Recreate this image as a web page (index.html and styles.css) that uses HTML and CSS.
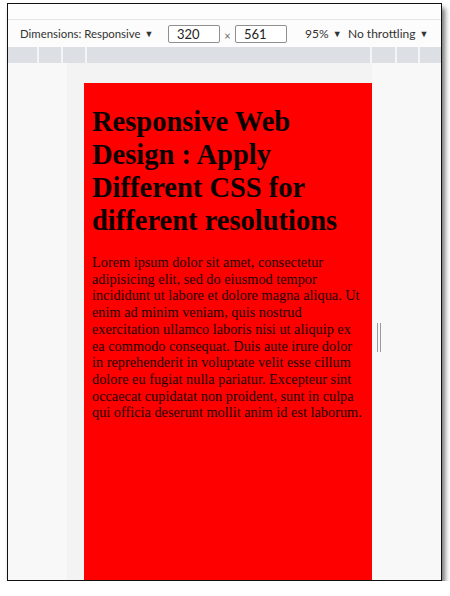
FILE: index.html
```html
<!DOCTYPE html>
<html>
<head>
<meta charset="utf-8">
<link rel="stylesheet" href="styles.css">
</head>
<body>
<div class="window">
  <div class="topstrip"></div>
  <div class="toolbar">
    <span class="dim">Dimensions: Responsive <span class="arrow">▼</span></span>
    <span class="box">320</span>
    <span class="times">×</span>
    <span class="box">561</span>
    <span class="zoom">95% <span class="arrow">▼</span></span>
    <span class="throttle">No throttling <span class="arrow">▼</span></span>
  </div>
  <div class="ruler">
    <div class="cell c1"></div>
    <div class="cell c2"></div>
    <div class="cell c3"></div>
    <div class="cell c4"></div>
    <div class="cell c5"></div>
    <div class="cell c6"></div>
    <div class="cell c7"></div>
  </div>
  <div class="viewport">
    <div class="device-shade">
      <div class="device">
        <h1 class="title">Responsive Web Design : Apply Different CSS for different resolutions</h1>
        <p class="text">Lorem ipsum dolor sit amet, consectetur adipisicing elit, sed do eiusmod tempor incididunt ut labore et dolore magna aliqua. Ut enim ad minim veniam, quis nostrud exercitation ullamco laboris nisi ut aliquip ex ea commodo consequat. Duis aute irure dolor in reprehenderit in voluptate velit esse cillum dolore eu fugiat nulla pariatur. Excepteur sint occaecat cupidatat non proident, sunt in culpa qui officia deserunt mollit anim id est laborum.</p>
      </div>
      <div class="handle-col">
        <div class="handle"></div>
      </div>
    </div>
  </div>
</div>
</body>
</html>
```
FILE: styles.css
```css
html, body {
  margin: 0;
  padding: 0;
  background: #ffffff;
}
.window {
  margin: 3px 0 0 7px;
  width: 433px;
  height: 576px;
  border: 1px solid #111;
  box-shadow: 3px 5px 5px rgba(0, 0, 0, 0.55);
  display: flex;
  flex-direction: column;
  overflow: hidden;
  background: #f8f8f8;
}
.topstrip {
  height: 15px;
  background: #fdfdfd;
  border-bottom: 1px solid #e6e6e6;
  flex: none;
}
.toolbar {
  height: 27px;
  flex: none;
  background: #fcfcfc;
  display: flex;
  align-items: center;
  font-family: Lato, "Open Sans", sans-serif;
  font-size: 12px;
  color: #333;
  padding-left: 12px;
  white-space: nowrap;
}
.arrow {
  font-size: 9px;
  position: relative;
  top: -1px;
  margin-left: 1px;
}
.dim {
  width: 148px;
  flex: none;
  font-size: 11.4px;
}
.box {
  width: 42px;
  height: 16px;
  border: 1px solid #8f8f8f;
  border-radius: 2px;
  background: #fff;
  padding-left: 8px;
  font-size: 13px;
  line-height: 16px;
  color: #222;
  flex: none;
}
.times {
  width: 15px;
  text-align: center;
  margin-top: 3px;
  color: #666;
  font-size: 11px;
  flex: none;
}
.zoom {
  margin-left: 18px;
  width: 43px;
  flex: none;
}
.ruler {
  height: 16px;
  flex: none;
  display: flex;
  gap: 2px;
  background: #f4f5f6;
}
.cell {
  background: #dcdfe3;
  height: 100%;
}
.c1 { width: 29px; }
.c2 { width: 22px; }
.c3 { width: 22px; }
.c4 { flex: 1; }
.c5 { width: 23px; }
.c6 { width: 21px; }
.c7 { width: 21px; }
.viewport {
  flex: 1;
  background: #f8f8f8;
  padding-left: 59px;
  display: flex;
}
.device-shade {
  display: flex;
  background: #f3f3f3;
  padding-left: 17px;
  width: 288px;
  padding-top: 20px;
}
.device {
  width: 288px;
  background: #ff0000;
  box-sizing: border-box;
  padding: 22px 6px 0 8px;
  flex: none;
}
.handle-col {
  width: 18px;
  flex: none;
  display: flex;
  align-items: center;
  padding-left: 5px;
  box-sizing: border-box;
}
.handle {
  width: 2px;
  height: 29px;
  border-left: 1px solid #9a9a9a;
  border-right: 1px solid #9a9a9a;
  margin-top: 12px;
}
.title {
  margin: 0;
  font-family: "Liberation Serif", "Times New Roman", serif;
  font-weight: bold;
  font-size: 28.5px;
  line-height: 33px;
  color: #0a0000;
}
.text {
  margin: 17px 0 0 0;
  font-family: "Liberation Serif", "Times New Roman", serif;
  font-size: 14.3px;
  line-height: 16.7px;
  color: #1a0000;
}
```
